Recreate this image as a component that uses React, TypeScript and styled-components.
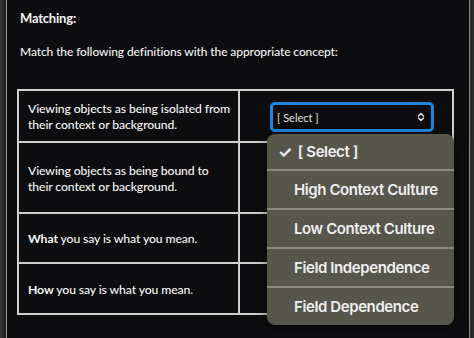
import React from "react";
import styled, { createGlobalStyle } from "styled-components";

const Global = createGlobalStyle`
  html, body { margin: 0; padding: 0; background: #0b0b0d; }
  * { box-sizing: border-box; }
`;

const Screen = styled.div`
  width: 474px;
  height: 338px;
  display: flex;
  overflow: hidden;
  background: #0b0b0d;
`;

const Bezel = styled.div`
  width: 6px;
  background: linear-gradient(90deg, #3a3a3a, #1c1c1c);
  flex: none;
`;

const RightBezel = styled.div`
  width: 4px;
  background: #2a2a2c;
  flex: none;
`;

const Panel = styled.div`
  flex: 1;
  border-left: 1px solid #9a9a9a;
  border-right: 1px solid #8a8a8a;
  padding: 10px 0 0 13px;
  font-family: Lato, "Open Sans", sans-serif;
  color: #f2f2f2;
  background: #0d0d10;
`;

const Title = styled.div`
  font-weight: 700;
  font-size: 13px;
  line-height: 16px;
  letter-spacing: -0.2px;
`;

const Prompt = styled.div`
  margin-top: 18px;
  font-size: 12px;
  font-weight: 500;
  line-height: 16px;
  letter-spacing: -0.1px;
`;

const TableWrap = styled.div`
  position: relative;
  margin: 29px 0 0 -3px;
  width: 437px;
`;

const Table = styled.table`
  border-collapse: collapse;
  table-layout: fixed;
  width: 437px;
`;

const Row = styled.tr<{ $h: number }>`
  height: ${(p) => p.$h}px;
`;

const Def = styled.td`
  width: 221px;
  border: 2px solid #cfcfcf;
  padding: 2px 0 0 9px;
  font-size: 12.2px;
  font-weight: 500;
  line-height: 16px;
  letter-spacing: -0.1px;
  color: #f6f6f6;
  vertical-align: middle;
  white-space: nowrap;
  overflow: hidden;
`;

const Choice = styled.td`
  border: 2px solid #cfcfcf;
  padding: 0 18px 0 30px;
  vertical-align: top;
`;

const SelectBox = styled.div`
  margin-top: 11px;
  height: 30px;
  border: 3px solid #1f86dc;
  border-radius: 5px;
  background: #0c0c0e;
  display: flex;
  align-items: center;
  justify-content: space-between;
  padding: 0 6px 0 4px;
  font-size: 11px;
  color: #e4e4e4;
`;

const Menu = styled.div`
  position: absolute;
  left: 250px;
  top: 45px;
  width: 187px;
  background: #57564b;
  border-radius: 8px;
  box-shadow: 0 4px 12px rgba(0, 0, 0, 0.5);
  overflow: hidden;
  font-family: Inter, "Noto Sans", sans-serif;
`;

const Item = styled.div<{ $first?: boolean }>`
  height: ${(p) => (p.$first ? 35 : 39)}px;
  display: flex;
  align-items: center;
  padding-left: ${(p) => (p.$first ? 11 : 27)}px;
  font-size: 15px;
  font-weight: 600;
  letter-spacing: -0.4px;
  color: #efefef;
  border-top: ${(p) => (p.$first ? "none" : "2px solid #8d8b80")};
`;

const Check = styled.span`
  margin-right: 6px;
  font-size: 16px;
  font-weight: 700;
`;

const rows = [
  {
    h: 52,
    text: (
      <>
        Viewing objects as being isolated from
        <br />
        their context or background.
      </>
    ),
    select: true,
  },
  {
    h: 71,
    text: (
      <>
        Viewing objects as being bound to
        <br />
        their context or background.
      </>
    ),
  },
  { h: 50, text: <><b>What</b> you say is what you mean.</> },
  { h: 51, text: <><b>How</b> you say is what you mean.</> },
];

const options = ["High Context Culture", "Low Context Culture", "Field Independence", "Field Dependence"];

const Chevrons = () => (
  <svg width="8" height="10" viewBox="0 0 8 10">
    <path d="M1.5 4 L4 1.5 L6.5 4 M1.5 6 L4 8.5 L6.5 6" stroke="#e8e8e8" strokeWidth="1.5" fill="none" strokeLinecap="round" strokeLinejoin="round" />
  </svg>
);

export default function App() {
  return (
    <Screen>
      <Global />
      <Bezel />
      <Panel>
        <Title>Matching:</Title>
        <Prompt>Match the following definitions with the appropriate concept:</Prompt>
        <TableWrap>
          <Table>
            <tbody>
              {rows.map((r, i) => (
                <Row key={i} $h={r.h}>
                  <Def>{r.text}</Def>
                  <Choice>
                    {r.select && (
                      <SelectBox>
                        <span>[ Select ]</span>
                        <Chevrons />
                      </SelectBox>
                    )}
                  </Choice>
                </Row>
              ))}
            </tbody>
          </Table>
          <Menu>
            <Item $first>
              <Check>✓</Check>[ Select ]
            </Item>
            {options.map((o) => (
              <Item key={o}>{o}</Item>
            ))}
          </Menu>
        </TableWrap>
      </Panel>
      <RightBezel />
    </Screen>
  );
}
